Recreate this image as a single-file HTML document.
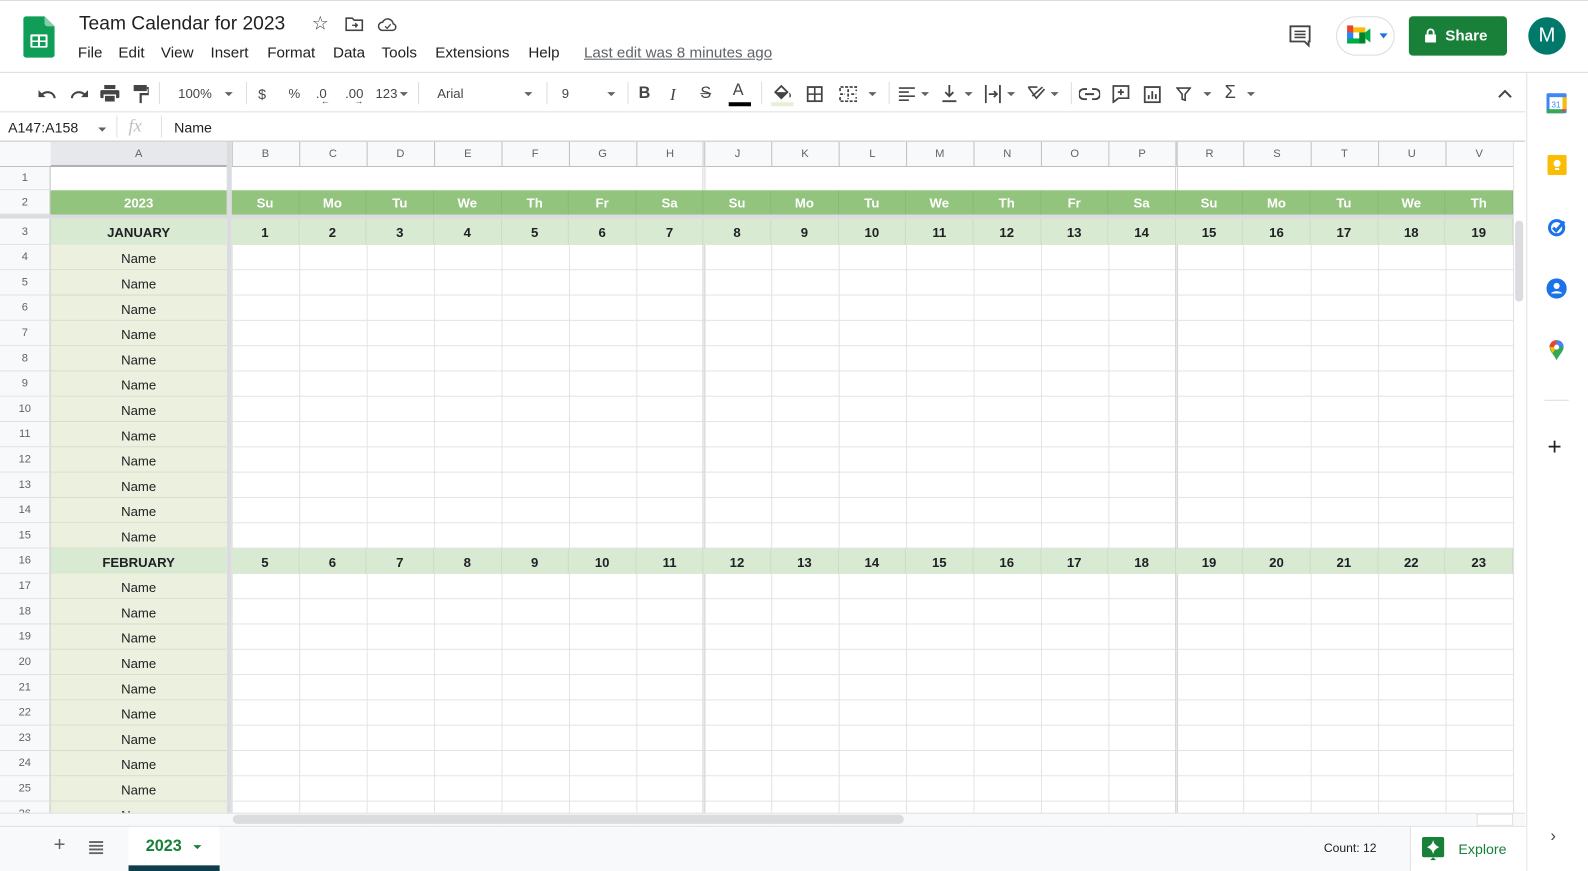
<!DOCTYPE html>
<html><head><meta charset="utf-8">
<style>
*{box-sizing:border-box;margin:0;padding:0}
html,body{width:1588px;height:871px;overflow:hidden;background:#fff}
#w{position:absolute;left:0;top:0;width:1569px;height:861px;transform:scale(1.0121);transform-origin:0 0;font-family:"Liberation Sans",Arial,sans-serif;color:#202124}
.a{position:absolute}
.t{position:absolute;white-space:nowrap}
.menu span{position:absolute;top:44px;font-size:15px;color:#202124}
.tb{position:absolute;top:85px;font-size:13px;color:#444746;white-space:nowrap}
.sep{position:absolute;top:81px;width:1px;height:22px;background:#dadce0}
.dd{position:absolute;top:91px;width:0;height:0;border-left:4px solid transparent;border-right:4px solid transparent;border-top:4px solid #5f6368}
.rown{position:absolute;left:0;width:50px;font-size:11px;color:#5f6368;text-align:center;background:#f8f9fa;border-right:1px solid #c0c0c0;border-bottom:1px solid #e0e0e0}
.cellA{position:absolute;left:50px;width:174px;font-size:13px;text-align:center;background:#ebf1de;border-bottom:1px solid #d6dccc}
.rowc{position:absolute;left:229px;width:1266px;display:flex}
.rowc div{flex:1;text-align:center;font-weight:bold;font-size:13px;border-right:1px solid rgba(0,0,0,0.06)}
.ch div{font-weight:normal!important;font-size:11px!important;color:#5f6368;border:0!important}
</style></head><body><div id="w">

<div class="a" style="left:0;top:0;width:1569px;height:1px;background:#dadce0"></div>
<svg class="a" style="left:23px;top:16px" width="31" height="41" viewBox="0 0 31 41"><path d="M3 0h18l10 10v28a3 3 0 0 1-3 3H3a3 3 0 0 1-3-3V3a3 3 0 0 1 3-3z" fill="#0f9d58"/><path d="M21 0l10 10H24a3 3 0 0 1-3-3z" fill="#87ceac"/><rect x="7" y="18" width="17" height="13" rx="1" fill="#fff"/><rect x="9" y="20" width="5.5" height="4" fill="#0f9d58"/><rect x="16.5" y="20" width="5.5" height="4" fill="#0f9d58"/><rect x="9" y="25.5" width="5.5" height="4" fill="#0f9d58"/><rect x="16.5" y="25.5" width="5.5" height="4" fill="#0f9d58"/></svg>
<div class="t" style="left:78px;top:13px;font-size:19px;color:#202124">Team Calendar for 2023</div>
<div class="t" style="left:308px;top:12px;font-size:19px;color:#444">☆</div>
<svg class="a" style="left:341px;top:16px" width="18" height="15" viewBox="0 0 18 15"><path d="M1 2h6l2 2h8v10H1z" fill="none" stroke="#444" stroke-width="1.6"/><path d="M7 9h5M10 7l2 2-2 2" fill="none" stroke="#444" stroke-width="1.4"/></svg>
<svg class="a" style="left:373px;top:17px" width="20" height="14" viewBox="0 0 20 14"><path d="M5 13a4 4 0 0 1 0-8 5.5 5.5 0 0 1 10.5 1.5A3.3 3.3 0 0 1 15 13z" fill="none" stroke="#444" stroke-width="1.5"/><path d="M7.5 9l2 2 3.5-4" fill="none" stroke="#444" stroke-width="1.3"/></svg>
<div class="menu"><span style="left:77px">File</span><span style="left:117px">Edit</span><span style="left:159px">View</span><span style="left:208px">Insert</span><span style="left:264px">Format</span><span style="left:329px">Data</span><span style="left:377px">Tools</span><span style="left:430px">Extensions</span><span style="left:522px">Help</span><span style="left:577px;color:#5f6368;text-decoration:underline">Last edit was 8 minutes ago</span></div>

<svg class="a" style="left:1273px;top:24px" width="23" height="23" viewBox="0 0 23 23"><path d="M2 2h19v15h-1v4l-4-4H2z" fill="none" stroke="#444" stroke-width="1.8"/><path d="M6 7h11M6 10h11M6 13h11" stroke="#444" stroke-width="1.6"/></svg>
<div class="a" style="left:1320px;top:16px;width:58px;height:39px;border:1px solid #dadce0;border-radius:20px;background:#fff"></div>
<svg class="a" style="left:1331px;top:25px" width="28" height="20" viewBox="0 0 28 20"><rect x="0" y="2" width="6" height="16" fill="#2684fc"/><rect x="0" y="2" width="18" height="5" fill="#fbbc04"/><rect x="0" y="13" width="18" height="5" fill="#00ac47"/><rect x="0" y="7" width="6" height="6" fill="#2684fc"/><rect x="0" y="0" width="6" height="7" fill="#ea4335"/><rect x="12" y="7" width="6" height="11" fill="#00832d"/><path d="M18 7l5-4v14l-5-4z" fill="#00ac47"/></svg>
<div class="a" style="left:1363px;top:33px;border-left:4px solid transparent;border-right:4px solid transparent;border-top:5px solid #1a73e8"></div>
<div class="a" style="left:1392px;top:16px;width:97px;height:39px;background:#188038;border-radius:4px;color:#fff;font-size:15px;font-weight:bold;line-height:39px;padding-left:36px">Share</div>
<svg class="a" style="left:1408px;top:28px" width="11" height="14" viewBox="0 0 11 14"><rect x="0" y="6" width="11" height="8" rx="1" fill="#fff"/><path d="M2.5 6V4a3 3 0 0 1 6 0v2" fill="none" stroke="#fff" stroke-width="1.8"/></svg>
<div class="a" style="left:1510px;top:17px;width:37px;height:37px;border-radius:50%;background:#00796b;color:#fff;font-size:20px;line-height:37px;text-align:center">M</div>

<div class="a" style="left:0;top:71px;width:1569px;height:1px;background:#dadce0"></div>
<svg class="a" style="left:38px;top:87px" width="18" height="12" viewBox="0 0 18 12"><path d="M3 7a7 6 0 0 1 13 3" fill="none" stroke="#444" stroke-width="2"/><path d="M0 2v7h7z" fill="#444"/></svg>
<svg class="a" style="left:69px;top:87px" width="18" height="12" viewBox="0 0 18 12"><path d="M15 7a7 6 0 0 0-13 3" fill="none" stroke="#444" stroke-width="2"/><path d="M18 2v7h-7z" fill="#444"/></svg>
<svg class="a" style="left:99px;top:84px" width="19" height="18" viewBox="0 0 19 18"><rect x="4" y="0" width="11" height="4" fill="#444"/><rect x="0" y="5" width="19" height="8" rx="1.5" fill="#444"/><rect x="4" y="10" width="11" height="7" fill="#444" stroke="#fff" stroke-width="1.4"/></svg>
<svg class="a" style="left:132px;top:84px" width="15" height="18" viewBox="0 0 15 18"><rect x="0" y="0" width="13" height="6" fill="#444"/><path d="M13 3h2v6H7v9" fill="none" stroke="#444" stroke-width="2.2"/></svg>
<div class="sep" style="left:157px"></div>
<div class="tb" style="left:176px">100%</div><div class="dd" style="left:222px"></div>
<div class="sep" style="left:243px"></div>
<div class="tb" style="left:255px;font-size:14px">$</div>
<div class="tb" style="left:285px">%</div>
<div class="tb" style="left:312px">.0<span style="position:absolute;left:5px;top:10px;font-size:9px">←</span></div>
<div class="tb" style="left:341px">.00<span style="position:absolute;left:9px;top:10px;font-size:9px">→</span></div>
<div class="tb" style="left:371px">123</div><div class="dd" style="left:395px"></div>
<div class="sep" style="left:413px"></div>
<div class="tb" style="left:432px">Arial</div><div class="dd" style="left:518px"></div>
<div class="sep" style="left:540px"></div>
<div class="tb" style="left:555px">9</div><div class="dd" style="left:600px"></div>
<div class="sep" style="left:620px"></div>
<div class="tb" style="left:631px;top:84px;font-size:16px;font-weight:bold">B</div>
<div class="tb" style="left:662px;top:84px;font-size:17px;font-style:italic;font-family:'Liberation Serif',serif">I</div>
<div class="tb" style="left:692px;top:84px;font-size:16px;text-decoration:line-through">S</div>
<div class="tb" style="left:724px;top:81px;font-size:16px">A</div><div class="a" style="left:720px;top:101px;width:22px;height:4px;background:#000"></div>
<div class="sep" style="left:752px"></div>
<svg class="a" style="left:763px;top:83px" width="20" height="16" viewBox="0 0 20 16"><path d="M3 8l6-6 6 6-6 6z" fill="none" stroke="#444" stroke-width="1.8"/><path d="M3 8h12l-6 6z" fill="#444"/><path d="M17 9c1 2 2 3 0 4" fill="#444" stroke="#444"/></svg>
<div class="a" style="left:762px;top:101px;width:22px;height:4px;background:#e6efd7"></div>
<svg class="a" style="left:797px;top:85px" width="16" height="16" viewBox="0 0 16 16"><rect x="1" y="1" width="14" height="14" fill="none" stroke="#444" stroke-width="1.8"/><path d="M8 1v14M1 8h14" stroke="#444" stroke-width="1.6"/></svg>
<svg class="a" style="left:829px;top:85px" width="18" height="16" viewBox="0 0 18 16"><path d="M1 5V1h16v4M1 11v4h16v-4M1 8h5M12 8h5M9 3v10" fill="none" stroke="#444" stroke-width="1.7" stroke-dasharray="3 1.5"/></svg><div class="dd" style="left:858px"></div>
<div class="sep" style="left:878px"></div>
<svg class="a" style="left:888px;top:86px" width="16" height="14" viewBox="0 0 16 14"><path d="M0 1h16M0 5h10M0 9h16M0 13h10" stroke="#444" stroke-width="1.6"/></svg><div class="dd" style="left:910px"></div>
<svg class="a" style="left:931px;top:84px" width="14" height="18" viewBox="0 0 14 18"><path d="M7 0v11M3 7l4 4 4-4M0 16h14" fill="none" stroke="#444" stroke-width="1.8"/></svg><div class="dd" style="left:953px"></div>
<svg class="a" style="left:973px;top:84px" width="16" height="18" viewBox="0 0 16 18"><path d="M1 0v18M15 0v18M4 9h8M9 6l3 3-3 3" fill="none" stroke="#444" stroke-width="1.8"/></svg><div class="dd" style="left:995px"></div>
<svg class="a" style="left:1015px;top:84px" width="18" height="16" viewBox="0 0 18 16"><path d="M1 2l8 11 8-9M1 2h9" fill="none" stroke="#444" stroke-width="1.6"/><path d="M5 11l10-9" stroke="#444" stroke-width="1.6"/></svg><div class="dd" style="left:1038px"></div>
<div class="sep" style="left:1058px"></div>
<svg class="a" style="left:1066px;top:87px" width="21" height="12" viewBox="0 0 21 12"><path d="M8 1H5a5 5 0 0 0 0 10h3M13 1h3a5 5 0 0 1 0 10h-3M6 6h9" fill="none" stroke="#444" stroke-width="1.9"/></svg>
<svg class="a" style="left:1099px;top:84px" width="17" height="18" viewBox="0 0 17 18"><path d="M1 1h15v12H6l-5 4z" fill="none" stroke="#444" stroke-width="1.7"/><path d="M8.5 4v6M5.5 7h6" stroke="#444" stroke-width="1.7"/></svg>
<svg class="a" style="left:1130px;top:85px" width="17" height="17" viewBox="0 0 17 17"><rect x="1" y="1" width="15" height="15" fill="none" stroke="#444" stroke-width="1.8"/><path d="M5 13V9M8.5 13V5M12 13V8" stroke="#444" stroke-width="1.8"/></svg>
<svg class="a" style="left:1162px;top:86px" width="15" height="14" viewBox="0 0 15 14"><path d="M1 1h13L9 7v6L6 12V7z" fill="none" stroke="#444" stroke-width="1.6"/></svg><div class="dd" style="left:1189px"></div>
<div class="tb" style="left:1210px;top:81px;font-size:18px">Σ</div><div class="dd" style="left:1232px"></div>
<svg class="a" style="left:1480px;top:88px" width="14" height="9" viewBox="0 0 14 9"><path d="M1 8l6-6 6 6" fill="none" stroke="#444" stroke-width="2"/></svg>
<div class="a" style="left:0;top:110px;width:1507px;height:1px;background:#e0e0e0"></div>
<div class="t" style="left:8px;top:118px;font-size:14px">A147:A158</div>
<div class="dd" style="left:97px;top:126px"></div>
<div class="a" style="left:115px;top:114px;width:1px;height:22px;background:#e0e0e0"></div>
<div class="t" style="left:127px;top:114px;font-size:18px;font-style:italic;color:#c0c0c0;font-family:'Liberation Serif',serif">fx</div>
<div class="a" style="left:159px;top:114px;width:1px;height:22px;background:#e0e0e0"></div>
<div class="t" style="left:172px;top:118px;font-size:14px">Name</div>
<div class="a" style="left:0;top:139px;width:1507px;height:1px;background:#c0c0c0"></div>

<div class="a" style="left:1508px;top:72px;width:1px;height:789px;background:#e0e0e0"></div>
<svg class="a" style="left:1528px;top:92px" width="20" height="20" viewBox="0 0 20 20"><rect x="0" y="0" width="20" height="20" rx="2" fill="#4285f4"/><rect x="3" y="4" width="13" height="12" fill="#fff"/><rect x="16" y="4" width="4" height="12" fill="#fbbc04"/><rect x="0" y="16" width="16" height="4" fill="#34a853"/><path d="M16 16h4l-4 4z" fill="#ea4335"/><text x="5" y="14" font-size="8" fill="#4285f4" font-family="Liberation Sans">31</text></svg>
<svg class="a" style="left:1529px;top:153px" width="19" height="20" viewBox="0 0 19 20"><rect width="19" height="20" rx="2" fill="#fbbc04"/><circle cx="9.5" cy="8.5" r="3.5" fill="#fff"/><rect x="7.5" y="13" width="4" height="2" fill="#fff"/></svg>
<svg class="a" style="left:1529px;top:214px" width="20" height="20" viewBox="0 0 20 20"><circle cx="9" cy="11" r="7" fill="none" stroke="#1a73e8" stroke-width="3"/><path d="M5.5 11l3 3 8-9" fill="none" stroke="#1a73e8" stroke-width="3"/></svg>
<svg class="a" style="left:1528px;top:275px" width="20" height="20" viewBox="0 0 20 20"><circle cx="10" cy="10" r="10" fill="#1a73e8"/><circle cx="10" cy="7.5" r="3" fill="#fff"/><path d="M4.5 15c1-3 10-3 11 0z" fill="#fff"/></svg>
<svg class="a" style="left:1531px;top:336px" width="14" height="20" viewBox="0 0 14 20"><path d="M7 20C4 14 0 11 0 7a7 7 0 0 1 14 0c0 4-4 7-7 13z" fill="#34a853"/><path d="M0 7a7 7 0 0 1 7-7v7z" fill="#ea4335"/><path d="M7 0a7 7 0 0 1 7 7H7z" fill="#4285f4"/><path d="M0 7h7l-4 6z" fill="#fbbc04"/><circle cx="7" cy="7" r="2.5" fill="#fff"/></svg>
<div class="a" style="left:1526px;top:395px;width:24px;height:1px;background:#dadce0"></div>
<div class="t" style="left:1529px;top:428px;font-size:24px;color:#202124">+</div>
<div class="t" style="left:1532px;top:818px;font-size:16px;color:#444">›</div>

<div class="a" style="left:0;top:140px;width:1507px;height:676px;overflow:hidden">
 <div class="a" style="left:0;top:0;width:1495px;height:25px;background:#f8f9fa;border-bottom:1px solid #c0c0c0"></div>
 <div class="a" style="left:50px;top:0;width:174px;height:25px;background:#e6e8eb;border-bottom:2px solid #b0b0b0"></div>
 <div class="a" style="left:229px;top:0;width:1266px;height:25px;background-image:linear-gradient(to right,#c0c0c0 1px,transparent 1px);background-size:66.63px 100%"></div>
 <div class="rowc ch" style="top:0;height:25px;line-height:25px"><div>B</div><div>C</div><div>D</div><div>E</div><div>F</div><div>G</div><div>H</div><div>J</div><div>K</div><div>L</div><div>M</div><div>N</div><div>O</div><div>P</div><div>R</div><div>S</div><div>T</div><div>U</div><div>V</div></div>
 <div class="t" style="left:50px;top:0;width:174px;line-height:25px;text-align:center;font-size:11px;color:#5f6368">A</div>
 <div class="a" style="left:229px;top:25px;width:1266px;height:660px;background-image:linear-gradient(to right,#e2e3e3 1px,transparent 1px),linear-gradient(to bottom,transparent 24px,#e2e3e3 24px);background-size:66.63px 100%,100% 25px;background-position:0 0,0 77px"></div>
 <div class="a" style="left:229px;top:25px;width:1266px;height:23px;background:#fff"></div>
 <div class="a" style="left:694px;top:0;width:3px;height:680px;border-left:1px solid #d6d6d6;border-right:1px solid #d6d6d6"></div>
 <div class="a" style="left:1161px;top:0;width:3px;height:680px;border-left:1px solid #d6d6d6;border-right:1px solid #d6d6d6"></div>
 <div class="a" style="left:224px;top:0;width:5px;height:680px;background:#dadce0"></div>
 <div class="a" style="left:0;top:72px;width:1495px;height:4px;background:#dadce0"></div>
 <div class="rown" style="top:25px;height:23px;line-height:23px">1</div>
 <div class="rown" style="top:48px;height:24px;line-height:24px">2</div>
 <div class="a" style="left:50px;top:48px;width:174px;height:24px;background:#93c47d;color:#fff;font-weight:bold;font-size:13px;line-height:25px;text-align:center">2023</div>
 <div class="rowc" style="top:48px;height:24px;line-height:25px;background:#93c47d;color:#fff"><div>Su</div><div>Mo</div><div>Tu</div><div>We</div><div>Th</div><div>Fr</div><div>Sa</div><div>Su</div><div>Mo</div><div>Tu</div><div>We</div><div>Th</div><div>Fr</div><div>Sa</div><div>Su</div><div>Mo</div><div>Tu</div><div>We</div><div>Th</div></div>
 <div class="rown" style="top:76px;height:26px;line-height:26px">3</div>
 <div class="a" style="left:50px;top:76px;width:174px;height:26px;background:#d9ead3;font-weight:bold;font-size:13px;line-height:28px;text-align:center">JANUARY</div>
 <div class="rowc" style="top:76px;height:26px;line-height:28px;background:#d9ead3"><div>1</div><div>2</div><div>3</div><div>4</div><div>5</div><div>6</div><div>7</div><div>8</div><div>9</div><div>10</div><div>11</div><div>12</div><div>13</div><div>14</div><div>15</div><div>16</div><div>17</div><div>18</div><div>19</div></div>
 <div class="rown" style="top:102px;height:25px;line-height:25px">4</div><div class="cellA" style="top:102px;height:25px;line-height:27px">Name</div>
 <div class="rown" style="top:127px;height:25px;line-height:25px">5</div><div class="cellA" style="top:127px;height:25px;line-height:27px">Name</div>
 <div class="rown" style="top:152px;height:25px;line-height:25px">6</div><div class="cellA" style="top:152px;height:25px;line-height:27px">Name</div>
 <div class="rown" style="top:177px;height:25px;line-height:25px">7</div><div class="cellA" style="top:177px;height:25px;line-height:27px">Name</div>
 <div class="rown" style="top:202px;height:25px;line-height:25px">8</div><div class="cellA" style="top:202px;height:25px;line-height:27px">Name</div>
 <div class="rown" style="top:227px;height:25px;line-height:25px">9</div><div class="cellA" style="top:227px;height:25px;line-height:27px">Name</div>
 <div class="rown" style="top:252px;height:25px;line-height:25px">10</div><div class="cellA" style="top:252px;height:25px;line-height:27px">Name</div>
 <div class="rown" style="top:277px;height:25px;line-height:25px">11</div><div class="cellA" style="top:277px;height:25px;line-height:27px">Name</div>
 <div class="rown" style="top:302px;height:25px;line-height:25px">12</div><div class="cellA" style="top:302px;height:25px;line-height:27px">Name</div>
 <div class="rown" style="top:327px;height:25px;line-height:25px">13</div><div class="cellA" style="top:327px;height:25px;line-height:27px">Name</div>
 <div class="rown" style="top:352px;height:25px;line-height:25px">14</div><div class="cellA" style="top:352px;height:25px;line-height:27px">Name</div>
 <div class="rown" style="top:377px;height:25px;line-height:25px">15</div><div class="cellA" style="top:377px;height:25px;line-height:27px">Name</div>
 <div class="rown" style="top:402px;height:25px;line-height:25px">16</div>
 <div class="a" style="left:50px;top:402px;width:174px;height:25px;background:#d9ead3;font-weight:bold;font-size:13px;line-height:27px;text-align:center">FEBRUARY</div>
 <div class="rowc" style="top:402px;height:25px;line-height:27px;background:#d9ead3"><div>5</div><div>6</div><div>7</div><div>8</div><div>9</div><div>10</div><div>11</div><div>12</div><div>13</div><div>14</div><div>15</div><div>16</div><div>17</div><div>18</div><div>19</div><div>20</div><div>21</div><div>22</div><div>23</div></div>
 <div class="rown" style="top:427px;height:25px;line-height:25px">17</div><div class="cellA" style="top:427px;height:25px;line-height:27px">Name</div>
 <div class="rown" style="top:452px;height:25px;line-height:25px">18</div><div class="cellA" style="top:452px;height:25px;line-height:27px">Name</div>
 <div class="rown" style="top:477px;height:25px;line-height:25px">19</div><div class="cellA" style="top:477px;height:25px;line-height:27px">Name</div>
 <div class="rown" style="top:502px;height:25px;line-height:25px">20</div><div class="cellA" style="top:502px;height:25px;line-height:27px">Name</div>
 <div class="rown" style="top:527px;height:25px;line-height:25px">21</div><div class="cellA" style="top:527px;height:25px;line-height:27px">Name</div>
 <div class="rown" style="top:552px;height:25px;line-height:25px">22</div><div class="cellA" style="top:552px;height:25px;line-height:27px">Name</div>
 <div class="rown" style="top:577px;height:25px;line-height:25px">23</div><div class="cellA" style="top:577px;height:25px;line-height:27px">Name</div>
 <div class="rown" style="top:602px;height:25px;line-height:25px">24</div><div class="cellA" style="top:602px;height:25px;line-height:27px">Name</div>
 <div class="rown" style="top:627px;height:25px;line-height:25px">25</div><div class="cellA" style="top:627px;height:25px;line-height:27px">Name</div>
 <div class="rown" style="top:652px;height:25px;line-height:25px">26</div><div class="cellA" style="top:652px;height:25px;line-height:27px">Name</div>
 <div class="a" style="left:1495px;top:0;width:12px;height:676px;background:#fff;border-left:1px solid #e0e0e0"></div>
 <div class="a" style="left:1497px;top:78px;width:8px;height:80px;background:#dadce0;border-radius:4px"></div>
 <div class="a" style="left:0;top:663px;width:1507px;height:13px;background:#f8f9fa;border-top:1px solid #e0e0e0"></div>
 <div class="a" style="left:230px;top:665px;width:663px;height:9px;background:#dadce0;border-radius:5px"></div>
 <div class="a" style="left:1459px;top:664px;width:36px;height:12px;border:1px solid #e0e0e0;background:#fff"></div>
</div>

<div class="a" style="left:0;top:816px;width:1508px;height:45px;background:#f8f9fa;border-top:1px solid #e0e0e0"></div>
<div class="t" style="left:53px;top:824px;font-size:20px;color:#5f6368">+</div>
<svg class="a" style="left:88px;top:831px" width="14" height="13" viewBox="0 0 14 13"><path d="M0 1h14M0 4.7h14M0 8.3h14M0 12h14" stroke="#5f6368" stroke-width="1.8"/></svg>
<div class="a" style="left:127px;top:817px;width:90px;height:44px;background:#fff"></div>
<div class="a" style="left:127px;top:855px;width:90px;height:6px;background:#0f3d4c"></div>
<div class="t" style="left:144px;top:828px;font-size:16px;color:#188038;font-weight:bold">2023</div>
<div class="a" style="left:191px;top:835px;border-left:4px solid transparent;border-right:4px solid transparent;border-top:4px solid #188038"></div>
<div class="t" style="left:1308px;top:831px;font-size:12px;color:#202124">Count: 12</div>
<div class="a" style="left:1393px;top:817px;width:115px;height:44px;background:#fff;border-left:1px solid #e0e0e0"></div>
<svg class="a" style="left:1405px;top:827px" width="22" height="23" viewBox="0 0 22 23"><rect width="22" height="20" rx="2" fill="#188038"/><path d="M11 20l-3 3h6z" fill="#188038"/><path d="M11 3c1 4 2 5 6 7-4 2-5 3-6 7-1-4-2-5-6-7 4-2 5-3 6-7z" fill="#fff"/></svg>
<div class="t" style="left:1441px;top:831px;font-size:14px;color:#188038">Explore</div>
</div></body></html>
